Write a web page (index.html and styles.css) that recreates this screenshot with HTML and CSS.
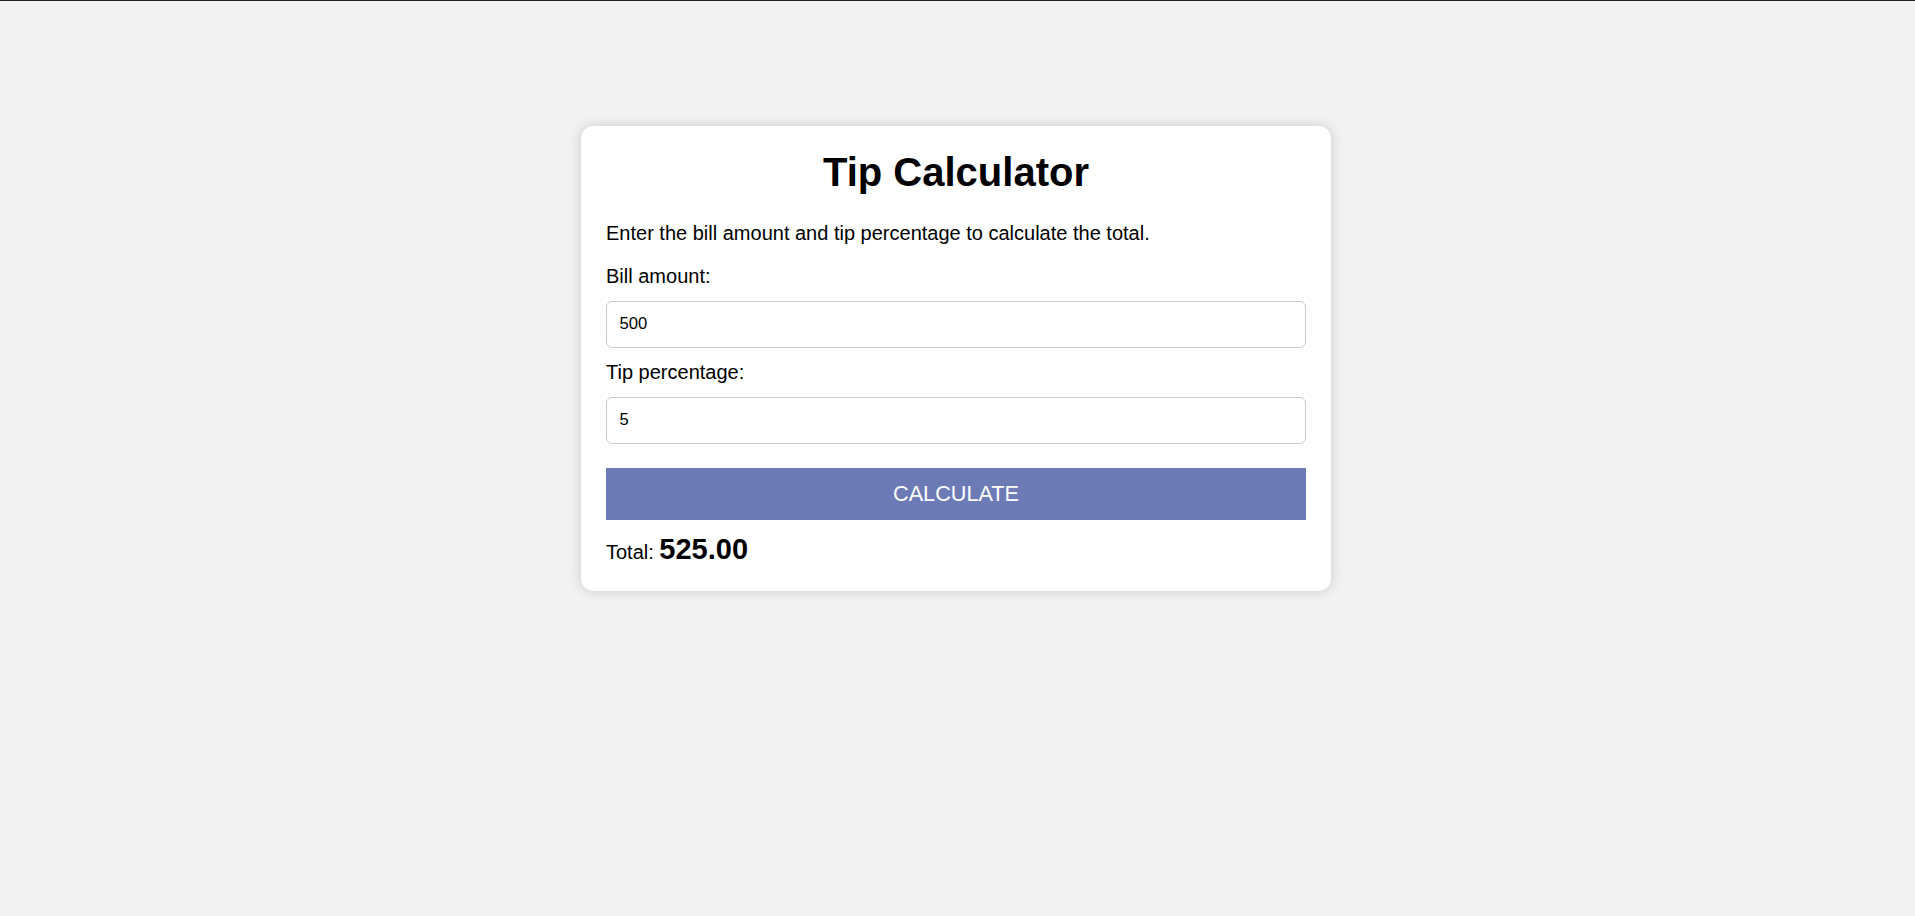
FILE: index.html
```html
<!DOCTYPE html>
<html lang="en">
<head>
<meta charset="utf-8">
<title>Tip Calculator</title>
<link rel="stylesheet" href="styles.css">
</head>
<body>
  <main class="card">
    <h1 class="title">Tip Calculator</h1>
    <p class="intro">Enter the bill amount and tip percentage to calculate the total.</p>
    <label class="field-label" for="bill">Bill amount:</label>
    <input class="field-input" id="bill" type="number" value="500">
    <label class="field-label" for="tip">Tip percentage:</label>
    <input class="field-input field-input-last" id="tip" type="number" value="5">
    <button class="calc-btn" type="button">Calculate</button>
    <div class="total">Total: <span class="total-value">525.00</span></div>
  </main>
</body>
</html>
```

FILE: styles.css
```css
html {
  background: #f2f2f2;
}

body {
  margin: 0;
  border-top: 1px solid #202124;
  padding: 125px 3px 0 0;
  background: #f2f2f2;
  font-family: "Liberation Sans", Arial, sans-serif;
  color: #000;
  min-height: 790px;
}

.card {
  display: block;
  width: 750px;
  box-sizing: border-box;
  margin: 0 auto;
  padding: 24px 25px 25px;
  background: #fff;
  border-radius: 12.5px;
  box-shadow: 0 0 12.5px rgba(0, 0, 0, 0.16);
}

.title {
  margin: 0 0 26.8px;
  font-size: 40px;
  font-weight: bold;
  line-height: normal;
  text-align: center;
}

.intro {
  margin: 0 0 20px;
  font-size: 20px;
  line-height: normal;
}

.field-label {
  display: block;
  margin-bottom: 13px;
  font-size: 20px;
  line-height: normal;
}

.field-input {
  display: block;
  width: 100%;
  box-sizing: border-box;
  margin: 0 0 13px;
  padding: 12.5px;
  border: 1px solid #ccc;
  border-radius: 6px;
  background: #fff;
  font-family: "Liberation Sans", Arial, sans-serif;
  font-size: 16.67px;
  line-height: normal;
  color: #000;
  -moz-appearance: textfield;
  appearance: textfield;
}

.field-input::-webkit-outer-spin-button,
.field-input::-webkit-inner-spin-button {
  -webkit-appearance: none;
  margin: 0;
}

.field-input-last {
  margin-bottom: 24.5px;
}

.calc-btn {
  display: block;
  width: 100%;
  margin: 0 0 12.5px;
  padding: 13px 0;
  border: none;
  border-radius: 0;
  background: #6c7bb5;
  color: #fff;
  font-family: "Liberation Sans", Arial, sans-serif;
  font-size: 21.67px;
  line-height: normal;
  text-transform: uppercase;
  cursor: pointer;
}

.total {
  font-size: 20px;
  line-height: normal;
}

.total-value {
  font-size: 29px;
  font-weight: bold;
}
```
